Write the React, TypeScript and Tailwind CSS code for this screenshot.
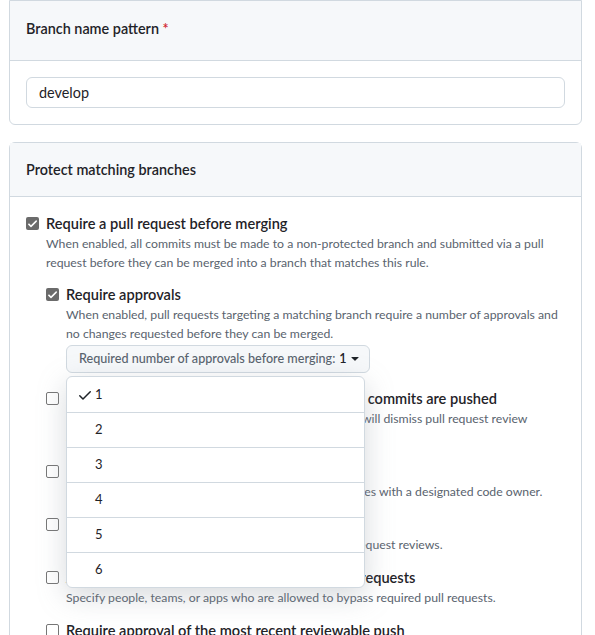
import React from "react";

type Rule = {
  title: string;
  desc: string;
  checked?: boolean;
};

const Box = ({ checked }: { checked?: boolean }) =>
  checked ? (
    <span className="mt-[3px] flex h-[13px] w-[13px] shrink-0 items-center justify-center rounded-[2px] bg-[#6b6b6b]">
      <svg viewBox="0 0 16 16" className="h-[11px] w-[11px]" fill="white">
        <path d="M14.2 3.8a1.1 1.1 0 0 1 0 1.55l-7.6 7.6a1.1 1.1 0 0 1-1.55 0L1.8 9.7a1.1 1.1 0 0 1 1.55-1.55L5.8 10.6l6.85-6.8a1.1 1.1 0 0 1 1.55 0Z" />
      </svg>
    </span>
  ) : (
    <span className="mt-[3px] block h-[13px] w-[13px] shrink-0 rounded-[2px] border border-[#767676] bg-white" />
  );

const Option = ({ rule, children }: { rule: Rule; children?: React.ReactNode }) => (
  <div className="flex gap-[7px]">
    <Box checked={rule.checked} />
    <div className="min-w-0 flex-1">
      <div className="text-[14.6px] font-semibold leading-[20px] text-[#1f2328]">{rule.title}</div>
      <p className="text-[12.25px] leading-[19px] text-[#59636e]">{rule.desc}</p>
      {children}
    </div>
  </div>
);

const subRules: Rule[] = [
  {
    title: "Dismiss stale pull request approvals when new commits are pushed",
    desc: "New reviewable commits pushed to a matching branch will dismiss pull request review approvals.",
  },
  {
    title: "Require review from Code Owners",
    desc: "Require an approved review in pull requests including files with a designated code owner.",
  },
  {
    title: "Restrict who can dismiss pull request reviews",
    desc: "Specify people, teams, or apps allowed to dismiss pull request reviews.",
  },
  {
    title: "Allow specified actors to bypass required pull requests",
    desc: "Specify people, teams, or apps who are allowed to bypass required pull requests.",
  },
  {
    title: "Require approval of the most recent reviewable push",
    desc: "Whether the most recent reviewable push must be approved by someone other than the person who pushed it.",
  },
];

export default function App() {
  const counts = [1, 2, 3, 4, 5, 6];

  return (
    <div className="min-h-screen bg-white pl-[9px] pr-[13px] font-['Lato','Liberation_Sans',sans-serif] text-[#1f2328]">
      {/* Branch name */}
      <div className="rounded-b-md border border-[#d1d9e0]">
        <div className="border-b border-[#d1d9e0] bg-[#f6f8fa] px-4 pb-[21px] pt-[18px] text-[14.4px] font-semibold leading-[20px]">
          Branch name pattern <span className="text-[#d1242f]">*</span>
        </div>
        <div className="p-4">
          <input
            type="text"
            defaultValue="develop"
            className="h-[31px] w-full rounded-md border border-[#d1d9e0] px-3 text-[14.4px] text-[#1f2328] outline-none"
          />
        </div>
      </div>

      {/* Protect matching branches */}
      <div className="mt-[17px] rounded-t-md border border-[#d1d9e0]">
        <div className="border-b border-[#d1d9e0] bg-[#f6f8fa] px-4 pb-[16px] pt-[17px] text-[14.4px] font-semibold leading-[20px]">
          Protect matching branches
        </div>
        <div className="px-4 pt-[17px]">
          <Option
            rule={{
              title: "Require a pull request before merging",
              desc: "When enabled, all commits must be made to a non-protected branch and submitted via a pull request before they can be merged into a branch that matches this rule.",
              checked: true,
            }}
          >
            <div className="mt-[13px] flex flex-col gap-[14px]">
              <Option
                rule={{
                  title: "Require approvals",
                  desc: "When enabled, pull requests targeting a matching branch require a number of approvals and no changes requested before they can be merged.",
                  checked: true,
                }}
              >
                <div className="relative mt-[2px] pb-[2px]">
                  <button className="flex h-[28px] items-center gap-[4px] rounded-md border border-[#d1d9e0] bg-[#f6f8fa] pl-3 pr-[10px] text-[12.6px] font-medium text-[#59636e]">
                    Required number of approvals before merging: <span className="font-semibold text-[#1f2328]">1</span>
                    <svg viewBox="4.4 7 7.2 4" className="h-[4px] w-[8px]" fill="#1f2328">
                      <path d="m4.427 7.427 3.396 3.396a.25.25 0 0 0 .354 0l3.396-3.396A.25.25 0 0 0 11.396 7H4.604a.25.25 0 0 0-.177.427Z" />
                    </svg>
                  </button>
                  <div className="absolute left-0 top-[31px] z-10 w-[299px] overflow-hidden rounded-md border border-[#d1d9e0] bg-white shadow-[0_8px_28px_rgba(140,149,159,0.35)]">
                    {counts.map((n, i) => (
                      <div
                        key={n}
                        className={`flex h-[35px] items-center gap-[2px] pl-[10px] text-[13px] text-[#1f2328] ${
                          i > 0 ? "border-t border-[#d1d9e0]" : ""
                        }`}
                      >
                        <span className="flex w-[16px] justify-center">
                          {n === 1 && (
                            <svg viewBox="0 0 16 16" className="h-[16px] w-[16px]" fill="#1f2328">
                              <path d="M13.78 4.22a.75.75 0 0 1 0 1.06l-7.25 7.25a.75.75 0 0 1-1.06 0L2.22 9.28a.751.751 0 0 1 1.06-1.06L6 10.94l6.72-6.72a.75.75 0 0 1 1.06 0Z" />
                            </svg>
                          )}
                        </span>
                        {n}
                      </div>
                    ))}
                  </div>
                </div>
              </Option>
              {subRules.map((r, i) => (
                <div key={r.title} className={i === 0 ? "pb-px" : ""}>
                  <Option rule={r} />
                </div>
              ))}
            </div>
          </Option>
        </div>
      </div>
    </div>
  );
}
